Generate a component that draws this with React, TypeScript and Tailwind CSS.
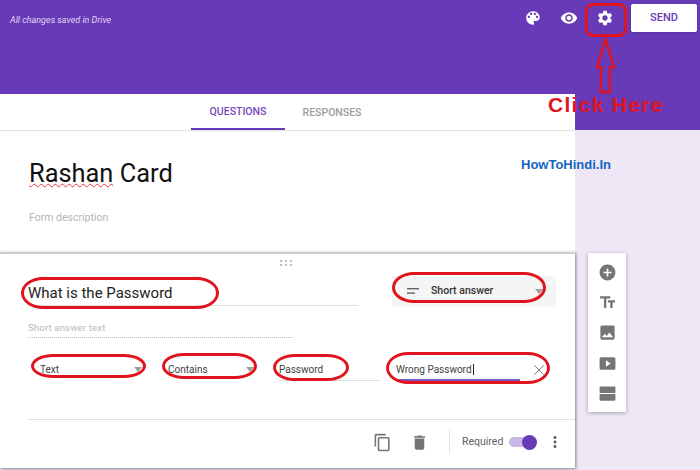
import { X } from 'lucide-react';

const paths = {
  palette:
    'M12 3c-4.97 0-9 4.03-9 9s4.03 9 9 9c.83 0 1.5-.67 1.5-1.5 0-.39-.15-.74-.39-1.01-.23-.26-.38-.61-.38-.99 0-.83.67-1.5 1.5-1.5H16c2.76 0 5-2.24 5-5 0-4.42-4.03-8-9-8zm-5.5 9c-.83 0-1.5-.67-1.5-1.5S5.67 9 6.5 9 8 9.67 8 10.5 7.33 12 6.5 12zm3-4C8.67 8 8 7.33 8 6.5S8.67 5 9.5 5s1.5.67 1.5 1.5S10.33 8 9.5 8zm5 0c-.83 0-1.5-.67-1.5-1.5S13.67 5 14.5 5s1.5.67 1.5 1.5S15.33 8 14.5 8zm3 4c-.83 0-1.5-.67-1.5-1.5S16.67 9 17.5 9s1.5.67 1.5 1.5-.67 1.5-1.5 1.5z',
  eye: 'M12 4.5C7 4.5 2.73 7.61 1 12c1.73 4.39 6 7.5 11 7.5s9.27-3.11 11-7.5c-1.73-4.39-6-7.5-11-7.5zM12 17c-2.76 0-5-2.24-5-5s2.24-5 5-5 5 2.24 5 5-2.24 5-5 5zm0-8c-1.66 0-3 1.34-3 3s1.34 3 3 3 3-1.34 3-3-1.34-3-3-3z',
  gear: 'M19.14 12.94c.04-.3.06-.61.06-.94 0-.32-.02-.64-.07-.94l2.03-1.58c.18-.14.23-.41.12-.61l-1.92-3.32c-.12-.22-.37-.29-.59-.22l-2.39.96c-.5-.38-1.03-.7-1.62-.94l-.36-2.54c-.04-.24-.24-.41-.48-.41h-3.84c-.24 0-.43.17-.47.41l-.36 2.54c-.59.24-1.13.57-1.62.94l-2.39-.96c-.22-.08-.47 0-.59.22L2.74 8.87c-.12.21-.08.47.12.61l2.03 1.58c-.05.3-.09.63-.09.94s.02.64.07.94l-2.03 1.58c-.18.14-.23.41-.12.61l1.92 3.32c.12.22.37.29.59.22l2.39-.96c.5.38 1.03.7 1.62.94l.36 2.54c.05.24.24.41.48.41h3.84c.24 0 .44-.17.47-.41l.36-2.54c.59-.24 1.13-.56 1.62-.94l2.39.96c.22.08.47 0 .59-.22l1.92-3.32c.12-.22.07-.47-.12-.61l-2.01-1.58zM12 15.6c-1.98 0-3.6-1.62-3.6-3.6s1.62-3.6 3.6-3.6 3.6 1.62 3.6 3.6-1.62 3.6-3.6 3.6z',
  add: 'M12 2C6.48 2 2 6.48 2 12s4.48 10 10 10 10-4.48 10-10S17.52 2 12 2zm5 11h-4v4h-2v-4H7v-2h4V7h2v4h4v2z',
  title: 'M2.5 4v3h5v12h3V7h5V4h-13zm19 5h-9v3h3v7h3v-7h3V9z',
  image: 'M21 19V5c0-1.1-.9-2-2-2H5c-1.1 0-2 .9-2 2v14c0 1.1.9 2 2 2h14c1.1 0 2-.9 2-2zM8.5 13.5l2.5 3.01L14.5 12l4.5 6H5l3.5-4.5z',
  video: 'M20 4H4c-1.1 0-2 .9-2 2v12c0 1.1.9 2 2 2h16c1.1 0 2-.9 2-2V6c0-1.1-.9-2-2-2zm-10 12V8l6 4-6 4z',
  section: 'M3 3h18c.55 0 1 .45 1 1v6.5c0 .55-.45 1-1 1H3c-.55 0-1-.45-1-1V4c0-.55.45-1 1-1zm0 9.5h18c.55 0 1 .45 1 1V20c0 .55-.45 1-1 1H3c-.55 0-1-.45-1-1v-6.5c0-.55.45-1 1-1z',
  copy: 'M16 1H4c-1.1 0-2 .9-2 2v14h2V3h12V1zm3 4H8c-1.1 0-2 .9-2 2v14c0 1.1.9 2 2 2h11c1.1 0 2-.9 2-2V7c0-1.1-.9-2-2-2zm0 16H8V7h11v14z',
  trash: 'M6 19c0 1.1.9 2 2 2h8c1.1 0 2-.9 2-2V7H6v12zM19 4h-3.5l-1-1h-5l-1 1H5v2h14V4z',
  dots: 'M12 8c1.1 0 2-.9 2-2s-.9-2-2-2-2 .9-2 2 .9 2 2 2zm0 2c-1.1 0-2 .9-2 2s.9 2 2 2 2-.9 2-2-.9-2-2-2zm0 6c-1.1 0-2 .9-2 2s.9 2 2 2 2-.9 2-2-.9-2-2-2z',
};

function Icon({ d, className }: { d: string; className: string }) {
  return (
    <svg viewBox="0 0 24 24" fill="currentColor" className={className}>
      <path d={d} />
    </svg>
  );
}

function Caret() {
  return <span className="h-0 w-0 border-x-[4px] border-t-[5px] border-x-transparent border-t-[#9e9e9e]" />;
}

// hand drawn marks from the screenshot
function Marks() {
  const ring = 'absolute rounded-[22px/50%] border-[3px] border-[#e0141e]';
  return (
    <>
      <div className="absolute left-[585px] top-[3px] h-[34px] w-[42px] rounded-lg border-[3px] border-[#e0141e]" />
      <svg viewBox="0 0 22 58" fill="none" className="absolute left-[595px] top-[37px] h-[58px] w-[22px]">
        <path d="M10.5 2 L19 30 H15 V55 H6 V30 H2 Z" stroke="#e0141e" strokeWidth="2.5" />
      </svg>
      <div className="absolute left-[548px] top-[93px] font-['Liberation_Sans',sans-serif] text-[21px] font-bold leading-[24px] tracking-[1.3px] text-[#e0141e]">
        Click Here
      </div>
      <div className="absolute left-[521px] top-[158px] font-['Liberation_Sans',sans-serif] text-[13px] font-bold leading-[14px] text-[#1565c0]">
        HowToHindi.In
      </div>
      <div className={`${ring} left-[21px] top-[277px] h-[32px] w-[198px]`} />
      <div className={`${ring} left-[392px] top-[272px] h-[31px] w-[154px]`} />
      <div className={`${ring} left-[31px] top-[354px] h-[24px] w-[115px]`} />
      <div className={`${ring} left-[162px] top-[353px] h-[26px] w-[95px]`} />
      <div className={`${ring} left-[273px] top-[354px] h-[27px] w-[76px]`} />
      <div className={`${ring} left-[386px] top-[352px] h-[32px] w-[164px]`} />
    </>
  );
}

export default function App() {
  const tools = [paths.add, paths.title, paths.image, paths.video, paths.section];

  return (
    <div className="relative flex h-[470px] w-[700px] flex-col overflow-hidden bg-[#ede7f6] font-['Roboto',sans-serif]">
      <header className="flex h-[94px] items-start justify-between bg-[#673ab7] pl-[10px] pr-[3px] pt-[4px]">
        <span className="mt-[9px] text-[9px] italic leading-[14px] text-[#e3d6f3]">All changes saved in Drive</span>
        <div className="flex items-center">
          <Icon d={paths.palette} className="h-[18px] w-[18px] text-white" />
          <Icon d={paths.eye} className="ml-[18px] h-[18px] w-[18px] text-white" />
          <Icon d={paths.gear} className="ml-[18px] h-[18px] w-[18px] text-white" />
          <button className="ml-[17px] h-[28px] w-[66px] rounded-[2px] bg-white text-[11px] font-medium text-[#673ab7] shadow-sm">
            SEND
          </button>
        </div>
      </header>

      <div className="flex flex-1">
        <main className="flex w-[575px] flex-col">
          <nav className="flex h-[37px] border-b border-[#e0e0e0] bg-white pl-[191px] text-[10.5px] font-medium">
            <div className="flex h-[36px] w-[94px] items-center justify-center border-b-2 border-[#673ab7] pt-[2px] text-[#7549bd]">
              QUESTIONS
            </div>
            <div className="flex h-[36px] w-[94px] items-center justify-center pt-[2px] text-[#9e9e9e]">RESPONSES</div>
          </nav>

          <section className="h-[121px] bg-white px-[29px] pt-[24px]">
            <h1 className="text-[25.4px] leading-[36px] text-[#111]">
              <span className="underline decoration-[#e53935] decoration-wavy decoration-1 underline-offset-1">Rashan</span> Card
            </h1>
            <p className="mt-[20px] text-[10.5px] leading-[14px] text-[#b5b5b5]">Form description</p>
          </section>

          <section className="flex h-[216px] flex-col border-t-2 border-[#cfcfcf] bg-white shadow-[1px_1px_3px_rgba(0,0,0,0.45)]">
            <div className="flex h-[20px] justify-center pt-[6px] text-[#bdbdbd]">
              <svg viewBox="0 0 12 6" fill="currentColor" className="mr-[3px] h-[6px] w-[12px]">
                <rect x="0" y="0" width="2" height="2" />
                <rect x="5" y="0" width="2" height="2" />
                <rect x="10" y="0" width="2" height="2" />
                <rect x="0" y="4" width="2" height="2" />
                <rect x="5" y="4" width="2" height="2" />
                <rect x="10" y="4" width="2" height="2" />
              </svg>
            </div>

            <div className="flex items-start justify-between pl-[28px] pr-[19px]">
              <div className="mt-[9px] flex h-[23px] w-[330px] items-center border-b border-[#e0e0e0] pb-[1px] text-[15px] text-[#222]">
                What is the Password
              </div>
              <div className="mt-[2px] flex h-[31px] w-[164px] items-center bg-[#f5f5f5] pb-[1px] pl-[15px] pr-[13px]">
                <svg viewBox="0 0 12 6" className="h-[6px] w-[12px]" fill="#616161">
                  <rect x="0" y="0" width="12" height="1.4" />
                  <rect x="0" y="4.4" width="8" height="1.4" />
                </svg>
                <span className="ml-[12px] flex-1 text-[10.5px] font-medium text-[#333]">Short answer</span>
                <Caret />
              </div>
            </div>

            <div className="ml-[28px] mt-[15px] flex h-[16px] w-[265px] items-center border-b border-dotted border-[#bdbdbd] pb-[2px] text-[9.7px] tracking-[0.1px] text-[#b9b9b9]">
              Short answer text
            </div>

            <div className="mt-[20px] flex h-[23px] items-center text-[10px] text-[#424242]">
              <div className="ml-[40px] flex w-[102px] items-center justify-between">
                Text
                <Caret />
              </div>
              <div className="ml-[26px] flex w-[86px] items-center justify-between">
                Contains
                <Caret />
              </div>
              <div className="ml-[25px] flex h-full w-[101px] items-center border-b border-[#e0e0e0]">Password</div>
              <div className="ml-[16px] flex h-full w-[124px] items-center border-b-2 border-[#7e57c2] pt-[1px]">
                Wrong Password<span className="ml-[1px] h-[11px] w-px bg-[#222]" />
              </div>
              <X className="ml-[10px] h-[18px] w-[18px] text-[#757575]" strokeWidth={1.3} />
            </div>

            <div className="ml-[28px] mt-[38px] flex h-[46px] items-center border-t border-[#e0e0e0] pb-[1px]">
              <Icon d={paths.copy} className="ml-[345px] h-[19px] w-[19px] text-[#757575]" />
              <Icon d={paths.trash} className="ml-[18px] h-[19px] w-[19px] text-[#757575]" />
              <div className="ml-[20px] h-[24px] w-px bg-[#e5e5e5]" />
              <span className="ml-[12px] text-[10.5px] text-[#616161]">Required</span>
              <div className="relative ml-[6px] h-[10px] w-[25px] rounded-full bg-[#c9b8e6]">
                <div className="absolute right-[-3px] top-[-2.5px] h-[15px] w-[15px] rounded-full bg-[#673ab7]" />
              </div>
              <Icon d={paths.dots} className="ml-[12px] h-[18px] w-[18px] text-[#616161]" />
            </div>
          </section>
        </main>

        <aside className="flex-1">
          <div className="h-[36px] bg-[#673ab7]" />
          <div className="ml-[13px] mt-[123px] flex h-[159px] w-[38px] flex-col items-center gap-[11.2px] bg-white pt-[10px] shadow-[0_1px_4px_rgba(0,0,0,0.3)]">
            {tools.map((d) => (
              <Icon key={d} d={d} className="h-[19px] w-[19px] text-[#757575]" />
            ))}
          </div>
        </aside>
      </div>

      <Marks />
    </div>
  );
}
